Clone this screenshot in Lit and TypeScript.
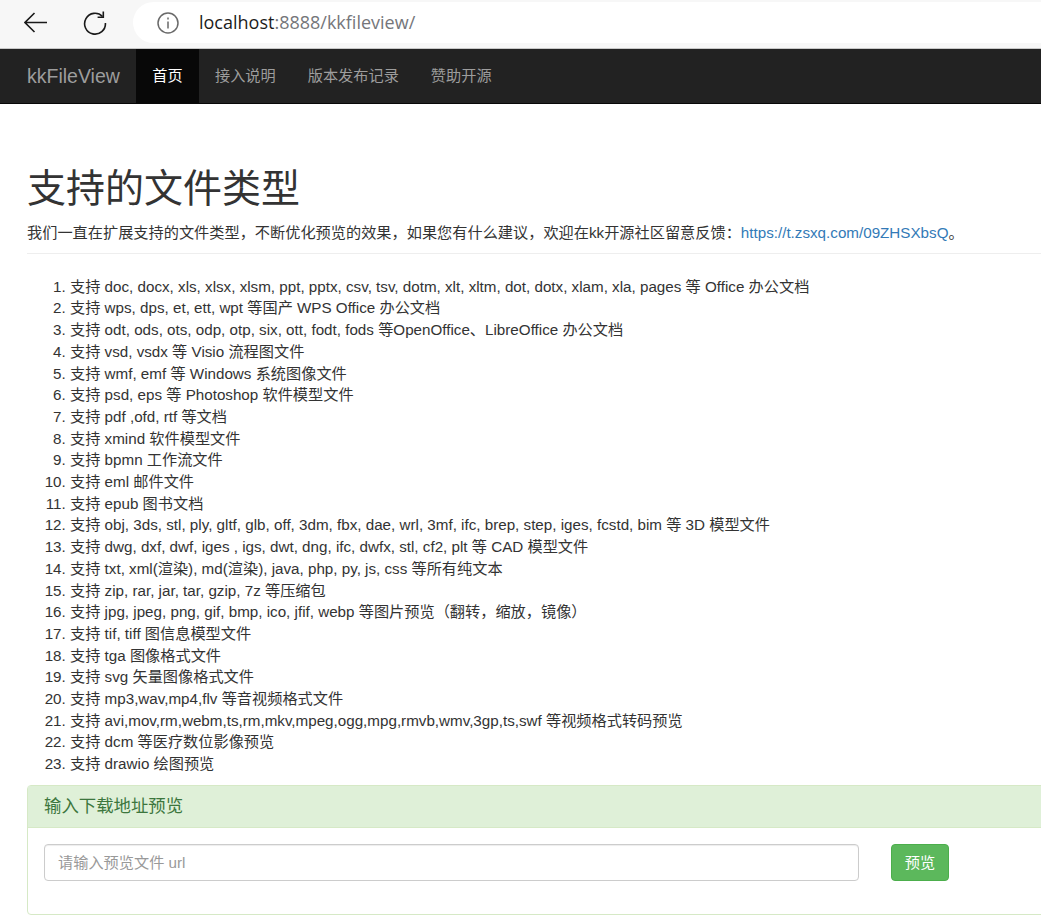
import { LitElement, html, css } from "lit";
import { customElement } from "lit/decorators.js";

const items = [
  "支持 doc, docx, xls, xlsx, xlsm, ppt, pptx, csv, tsv, dotm, xlt, xltm, dot, dotx, xlam, xla, pages 等 Office 办公文档",
  "支持 wps, dps, et, ett, wpt 等国产 WPS Office 办公文档",
  "支持 odt, ods, ots, odp, otp, six, ott, fodt, fods 等OpenOffice、LibreOffice 办公文档",
  "支持 vsd, vsdx 等 Visio 流程图文件",
  "支持 wmf, emf 等 Windows 系统图像文件",
  "支持 psd, eps 等 Photoshop 软件模型文件",
  "支持 pdf ,ofd, rtf 等文档",
  "支持 xmind 软件模型文件",
  "支持 bpmn 工作流文件",
  "支持 eml 邮件文件",
  "支持 epub 图书文档",
  "支持 obj, 3ds, stl, ply, gltf, glb, off, 3dm, fbx, dae, wrl, 3mf, ifc, brep, step, iges, fcstd, bim 等 3D 模型文件",
  "支持 dwg, dxf, dwf, iges , igs, dwt, dng, ifc, dwfx, stl, cf2, plt 等 CAD 模型文件",
  "支持 txt, xml(渲染), md(渲染), java, php, py, js, css 等所有纯文本",
  "支持 zip, rar, jar, tar, gzip, 7z 等压缩包",
  "支持 jpg, jpeg, png, gif, bmp, ico, jfif, webp 等图片预览（翻转，缩放，镜像）",
  "支持 tif, tiff 图信息模型文件",
  "支持 tga 图像格式文件",
  "支持 svg 矢量图像格式文件",
  "支持 mp3,wav,mp4,flv 等音视频格式文件",
  "支持 avi,mov,rm,webm,ts,rm,mkv,mpeg,ogg,mpg,rmvb,wmv,3gp,ts,swf 等视频格式转码预览",
  "支持 dcm 等医疗数位影像预览",
  "支持 drawio 绘图预览",
];

@customElement("app-root")
export class AppRoot extends LitElement {
  static styles = css`
    :host {
      display: block;
      width: 1041px;
      height: 924px;
      overflow: hidden;
      background: #fff;
      color: #333;
      font-family: "Liberation Sans", "Noto Sans CJK SC", sans-serif;
      font-size: 15.2px;
      line-height: 21.7px;
    }

    .chrome {
      display: flex;
      height: 48px;
      background: #f7f7f7;
      border-bottom: 1px solid #c8c8c8;
    }
    .chrome-icons {
      display: flex;
      align-items: center;
      gap: 35px;
      width: 133px;
      height: 45px;
      padding-left: 24px;
      box-sizing: border-box;
    }
    .chrome-icons svg {
      display: block;
    }
    .address {
      display: flex;
      align-items: center;
      gap: 19px;
      flex: 1;
      height: 41px;
      margin-top: 2px;
      padding-left: 23px;
      border-radius: 21px 0 0 21px;
      background: #fff;
      font-family: "Open Sans", "Liberation Sans", sans-serif;
      font-size: 18px;
      color: #75767a;
    }
    .address b {
      font-weight: 400;
      color: #1c1c1c;
    }

    .navbar {
      display: flex;
      height: 55px;
      background: #222;
      border-bottom: 1px solid #080808;
      box-sizing: border-box;
      padding-left: 27px;
    }
    .brand {
      width: 109px;
      font-size: 19.5px;
      line-height: 54px;
      color: #9d9d9d;
    }
    .nav-link {
      padding: 0 16px;
      line-height: 54px;
      color: #9d9d9d;
    }
    .nav-link.active {
      padding: 0 16.3px;
      background: #080808;
      color: #fff;
    }

    .container {
      padding: 63px 0 0 27px;
    }
    .page-header {
      border-bottom: 1px solid #eee;
      padding-bottom: 9px;
      margin-bottom: 22px;
    }
    h1 {
      margin: 0 0 12px;
      font-size: 39px;
      font-weight: 400;
      line-height: 43px;
    }
    .lead {
      white-space: nowrap;
    }
    a {
      color: #337ab7;
      text-decoration: none;
    }
    ol {
      margin: 0 0 10px;
      padding-left: 43px;
    }

    .panel {
      width: 1100px;
      height: 130px;
      box-sizing: border-box;
      border: 1px solid #d6e9c6;
      border-radius: 4px;
      background: #fff;
    }
    .panel-heading {
      height: 41px;
      padding: 0 16px;
      background: #dff0d8;
      border-bottom: 1px solid #d6e9c6;
      color: #3c763d;
      font-size: 17.4px;
      line-height: 41px;
    }
    .panel-body {
      display: flex;
      gap: 32px;
      padding: 16px;
    }
    .url {
      width: 815px;
      height: 37px;
      box-sizing: border-box;
      padding: 0 13px;
      border: 1px solid #ccc;
      border-radius: 4px;
      box-shadow: inset 0 1px 1px rgba(0, 0, 0, 0.075);
      font: inherit;
      color: #555;
    }
    .url::placeholder {
      color: #999;
      opacity: 1;
    }
    .btn {
      width: 58px;
      height: 37px;
      padding: 0;
      border: 1px solid #4cae4c;
      border-radius: 4px;
      background: #5cb85c;
      color: #fff;
      font: inherit;
    }
  `;

  render() {
    return html`
      <div class="chrome">
        <div class="chrome-icons">
          <svg width="24" height="24" viewBox="0 0 24 24" fill="none" stroke="#1a1a1a" stroke-width="1.6">
            <path d="M1 11.5H23M10.5 2L1 11.5L10.5 21" />
          </svg>
          <svg width="24" height="24" viewBox="0 0 24 24" fill="none" stroke="#1a1a1a" stroke-width="1.6">
            <path d="M19.5 5.5A10.4 10.4 0 1 0 22.4 12" />
            <path d="M20.3 0.5V6.2H14.6" />
          </svg>
        </div>
        <div class="address">
          <svg width="24" height="24" viewBox="0 0 24 24" fill="none" stroke="#6a6a6a" stroke-width="1.5">
            <circle cx="12" cy="12" r="10" />
            <path d="M12 10.5V17.5M12 6.5V8.5" />
          </svg>
          <span><b>localhost</b>:8888/kkfileview/</span>
        </div>
      </div>
      <nav class="navbar">
        <div class="brand">kkFileView</div>
        <div class="nav-link active">首页</div>
        <div class="nav-link">接入说明</div>
        <div class="nav-link">版本发布记录</div>
        <div class="nav-link">赞助开源</div>
      </nav>
      <div class="container">
        <div class="page-header">
          <h1>支持的文件类型</h1>
          <div class="lead">
            我们一直在扩展支持的文件类型，不断优化预览的效果，如果您有什么建议，欢迎在kk开源社区留意反馈：<a>https://t.zsxq.com/09ZHSXbsQ</a>。
          </div>
        </div>
        <ol>
          ${items.map((t) => html`<li>${t}</li>`)}
        </ol>
        <div class="panel">
          <div class="panel-heading">输入下载地址预览</div>
          <div class="panel-body">
            <input class="url" placeholder="请输入预览文件 url" />
            <button class="btn">预览</button>
          </div>
        </div>
      </div>
    `;
  }
}
